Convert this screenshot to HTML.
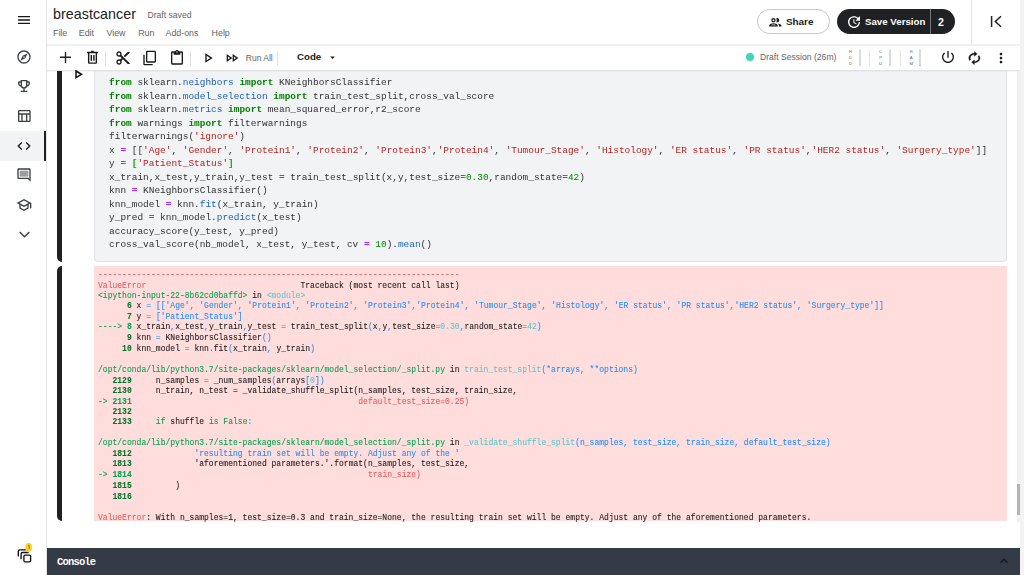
<!DOCTYPE html>
<html>
<head>
<meta charset="utf-8">
<style>
*{box-sizing:border-box;margin:0;padding:0}
html,body{width:1024px;height:575px;overflow:hidden;background:#fff;font-family:"Liberation Sans",sans-serif;color:#202124}
div,span,svg,pre{position:absolute}
pre span,pre b{position:static}
.ic{display:block}
#strip{left:1020px;top:0;width:4px;height:575px;background:#f3f3f3}
#side{left:0;top:0;width:47px;height:575px;background:#fff;border-right:1px solid #e4e5e7}
#active{left:0;top:131px;width:46px;height:30px;background:#f1f3f4}
#activebar{left:44px;top:131px;width:2px;height:30px;background:#202124}
#header{left:47px;top:0;width:973px;height:46px;background:#fff;border-bottom:2px solid #f0f1f2}
#title{left:53px;top:5.700px;letter-spacing:0.030px;font-size:14.300px;line-height:17px;color:#202124;white-space:nowrap}
#draft{left:147.500px;top:10.300px;font-size:8.600px;line-height:10px;color:#5f6368;white-space:nowrap}
.menu{top:27.500px;font-size:8.850px;line-height:11px;color:#5f6368;white-space:nowrap}
#rightpane{left:971px;top:0;width:49px;height:44px;border-left:1px solid #e4e5e7;background:#fff}
#share{left:757px;top:9px;width:73px;height:25px;border:1px solid #c4c6c9;border-radius:13px;background:#fff}
#sharet{left:786px;top:16.200px;font-size:9.900px;line-height:12px;font-weight:bold;color:#202124}
#save{left:836.500px;top:9px;width:118.500px;height:25px;border-radius:13px;background:#202124}
#savet{left:865px;top:16.450px;font-size:9.700px;line-height:12px;font-weight:bold;color:#fff;white-space:nowrap}
#saven{left:938px;top:16.450px;font-size:10.500px;line-height:12px;font-weight:bold;color:#fff}
#savediv{left:929.500px;top:9px;width:1px;height:25px;background:#75777a}
#toolbar{left:47px;top:46px;width:973px;height:25px;background:#fff;border-bottom:1px solid #e2e3e5}
#tbshadow{left:47px;top:71px;width:973px;height:1px;background:rgba(0,0,0,0.03)}
.sep{top:50.500px;width:1px;height:15px;background:#dfe1e4}
#runall{left:245.800px;top:52.600px;font-size:8.500px;line-height:11px;color:#5f6368;white-space:nowrap}
#codet{left:297px;top:51.300px;font-size:9.700px;line-height:12px;font-weight:bold;color:#202124}
#sess{left:760px;top:52.350px;font-size:8.600px;line-height:10px;color:#5f6368;white-space:nowrap}
#dot{left:746px;top:53px;width:8px;height:8px;border-radius:4px;background:#3ed6b5}
.meter{top:49.300px;font-size:4.300px;line-height:6px;color:#666;text-align:center;width:6px}
.mbar{top:49.300px;width:2px;height:16.700px;background:#dadada;border-radius:1px}
.msep{top:50px;width:1px;height:15.500px;background:#e6e6e6}
#content{left:47px;top:71px;width:970px;height:477px;background:#fff;overflow:hidden;will-change:transform}
.bar{left:10px;width:5px;background:#202124}
#cell{left:47px;top:-8px;width:913px;height:198.500px;background:#f1f3f4;border:1px solid #e0e2e5;border-radius:0 0 4px 4px}
pre{font-family:"Liberation Mono",monospace}
#src{left:14.100px;top:12px;font-size:9.452px;line-height:13.500px;color:#2f3134;white-space:pre}
#src b{color:#008000;font-weight:bold}
#src .m{color:#1e5fb3}
#src .s{color:#ba2121}
#src .o{color:#aa22ff;font-weight:bold}
#src .n{color:#008800}
#src .k{color:#00b400;font-weight:bold}
#out{left:47px;top:195px;width:913px;height:255px;background:#ffdddd}
#tb{left:4px;top:3.300px;-webkit-text-stroke:0.080px;transform:scaleY(1.160);transform-origin:0 0;font-size:8.040px;line-height:9.080px;color:#1a1a1a;white-space:pre}
#tb .r{color:#e75c58}
#tb .g{color:#00a250}
#tb .G{color:#007427;font-weight:bold}
#tb .c{color:#60c6c8}
#tb .b{color:#208ffb}
#scroll{left:1017px;top:71px;width:3px;height:451px;background:#f1f1f1}
#thumb{left:1017px;top:484px;width:3px;height:31px;background:#b4b4b4}
#console{left:47px;top:548px;width:973px;height:27px;background:#353a47}
#consolet{left:57px;top:555.500px;font-family:"Liberation Mono",monospace;font-weight:bold;font-size:10.500px;line-height:12px;letter-spacing:-0.830px;color:#fff}
</style>
</head>
<body>
<div id="strip"></div>
<div id="side"><div id="active"></div><div id="activebar"></div></div>
<div id="header"></div>
<div id="title">breastcancer</div>
<div id="draft">Draft saved</div>
<div class="menu" style="left:53px">File</div>
<div class="menu" style="left:78.800px">Edit</div>
<div class="menu" style="left:106.500px">View</div>
<div class="menu" style="left:138.200px">Run</div>
<div class="menu" style="left:165.500px">Add-ons</div>
<div class="menu" style="left:211.600px">Help</div>
<div id="rightpane"></div>
<div id="share"></div><div id="sharet">Share</div>
<div id="save"></div><div id="savet">Save Version</div><div id="savediv"></div><div id="saven">2</div>
<div id="toolbar"></div>
<div class="sep" style="left:105px"></div>
<div class="sep" style="left:190px"></div>
<div class="sep" style="left:277px"></div>
<div id="runall">Run All</div>
<div id="codet">Code</div>
<div id="dot"></div>
<div id="sess">Draft Session (26m)</div>
<div class="meter" style="left:847.200px">H<br>D<br>D</div><div class="mbar" style="left:858.500px"></div>
<div class="msep" style="left:869px"></div>
<div class="meter" style="left:877.600px">C<br>P<br>U</div><div class="mbar" style="left:889.200px"></div>
<div class="msep" style="left:899.500px"></div>
<div class="meter" style="left:908.300px">R<br>A<br>M</div><div class="mbar" style="left:919.400px;background:linear-gradient(#dadada 0,#dadada 92%,#4fd0c0 92%)"></div>
<div id="content">
  <div class="bar" style="top:-10px;height:201px;border-radius:0 0 0 5px"></div>
  <div class="bar" style="top:195px;height:255px;border-radius:5px 0 0 5px"></div>
  <div id="cell"><pre id="src"><b>from</b> sklearn.<span class="m">neighbors</span> <b>import</b> KNeighborsClassifier
<b>from</b> sklearn.<span class="m">model_selection</span> <b>import</b> train_test_split,cross_val_score
<b>from</b> sklearn.<span class="m">metrics</span> <b>import</b> mean_squared_error,r2_score
<b>from</b> warnings <b>import</b> filterwarnings
filterwarnings(<span class="s">'ignore'</span>)
x <span class="o">=</span> [[<span class="s">'Age'</span>, <span class="s">'Gender'</span>, <span class="s">'Protein1'</span>, <span class="s">'Protein2'</span>, <span class="s">'Protein3'</span>,<span class="s">'Protein4'</span>, <span class="s">'Tumour_Stage'</span>, <span class="s">'Histology'</span>, <span class="s">'ER status'</span>, <span class="s">'PR status'</span>,<span class="s">'HER2 status'</span>, <span class="s">'Surgery_type'</span>]]
y <span class="o">=</span> <span class="k">[</span><span class="s">'Patient_Status'</span><span class="k">]</span>
x_train,x_test,y_train,y_test <span class="o">=</span> train_test_split(x,y,test_size<span class="o">=</span><span class="n">0.30</span>,random_state<span class="o">=</span><span class="n">42</span>)
knn <span class="o">=</span> KNeighborsClassifier()
knn_model <span class="o">=</span> knn.<span class="m">fit</span>(x_train, y_train)
y_pred <span class="o">=</span> knn_model.<span class="m">predict</span>(x_test)
accuracy_score(y_test, y_pred)
cross_val_score(nb_model, x_test, y_test, cv <span class="o">=</span> <span class="n">10</span>).<span class="m">mean</span>()</pre></div>
  <div id="out"><pre id="tb"><span class="r">---------------------------------------------------------------------------</span>
<span class="r">ValueError</span>                                Traceback (most recent call last)
<span class="g">&lt;ipython-input-22-8b62cd0baffd&gt;</span> in <span class="c">&lt;module&gt;</span>
<span class="G">      6</span> x <span class="b">=</span> <span class="b">[[</span><span class="b">'Age'</span><span class="b">,</span> <span class="b">'Gender'</span><span class="b">,</span> <span class="b">'Protein1'</span><span class="b">,</span> <span class="b">'Protein2'</span><span class="b">,</span> <span class="b">'Protein3'</span><span class="b">,</span><span class="b">'Protein4'</span><span class="b">,</span> <span class="b">'Tumour_Stage'</span><span class="b">,</span> <span class="b">'Histology'</span><span class="b">,</span> <span class="b">'ER status'</span><span class="b">,</span> <span class="b">'PR status'</span><span class="b">,</span><span class="b">'HER2 status'</span><span class="b">,</span> <span class="b">'Surgery_type'</span><span class="b">]]</span>
<span class="G">      7</span> y <span class="b">=</span> <span class="b">[</span><span class="b">'Patient_Status'</span><span class="b">]</span>
<span class="g">----&gt; <b>8</b></span> x_train<span class="b">,</span>x_test<span class="b">,</span>y_train<span class="b">,</span>y_test <span class="b">=</span> train_test_split<span class="b">(</span>x<span class="b">,</span>y<span class="b">,</span>test_size<span class="b">=</span><span class="c">0.30</span><span class="b">,</span>random_state<span class="b">=</span><span class="c">42</span><span class="b">)</span>
<span class="G">      9</span> knn <span class="b">=</span> KNeighborsClassifier<span class="b">()</span>
<span class="G">     10</span> knn_model <span class="b">=</span> knn<span class="b">.</span>fit<span class="b">(</span>x_train<span class="b">,</span> y_train<span class="b">)</span>

<span class="g">/opt/conda/lib/python3.7/site-packages/sklearn/model_selection/_split.py</span> in <span class="c">train_test_split</span><span class="b">(*arrays, **options)</span>
<span class="G">   2129</span>     n_samples <span class="b">=</span> _num_samples<span class="b">(</span>arrays<span class="b">[</span><span class="c">0</span><span class="b">])</span>
<span class="G">   2130</span>     n_train, n_test = _validate_shuffle_split(n_samples, test_size, train_size,
<span class="g">-&gt; <b>2131</b></span>                                               <span class="r">default_test_size=0.25)</span>
<span class="G">   2132</span> 
<span class="G">   2133</span>     <span class="g">if</span> shuffle <span class="g">is</span> <span class="g">False</span><span class="b">:</span>

<span class="g">/opt/conda/lib/python3.7/site-packages/sklearn/model_selection/_split.py</span> in <span class="c">_validate_shuffle_split</span><span class="b">(n_samples, test_size, train_size, default_test_size)</span>
<span class="G">   1812</span>             <span class="b">'resulting train set will be empty. Adjust any of the '</span>
<span class="G">   1813</span>             'aforementioned parameters.'.format(n_samples, test_size,
<span class="g">-&gt; <b>1814</b></span>                                                 <span class="r">train_size)</span>
<span class="G">   1815</span>         )
<span class="G">   1816</span> 

<span class="r">ValueError</span>: With n_samples=1, test_size=0.3 and train_size=None, the resulting train set will be empty. Adjust any of the aforementioned parameters.</pre></div>
</div>
<div id="tbshadow"></div>
<div id="scroll"></div><div id="thumb"></div>
<div id="console"></div><div id="consolet">Console</div>
<svg class="ic" style="left:16.2px;top:12px" width="16" height="16" viewBox="0 0 24 24"><path fill="#17181a" d="M3 18h18v-2H3v2zm0-5h18v-2H3v2zm0-7v2h18V6H3z"/></svg>
<svg class="ic" style="left:16.2px;top:48.8px" width="16" height="16" viewBox="0 0 24 24"><path fill="#3c4043" d="M12 2C6.48 2 2 6.48 2 12s4.48 10 10 10 10-4.48 10-10S17.52 2 12 2zm0 18c-4.41 0-8-3.59-8-8s3.59-8 8-8 8 3.59 8 8-3.59 8-8 8zm-5.5-2.5l7.51-3.49L17.5 6.5 9.99 9.99 6.5 17.5zm5.5-6.6c.61 0 1.1.49 1.1 1.1s-.49 1.1-1.1 1.1-1.1-.49-1.1-1.1.49-1.1 1.1-1.1z"/></svg>
<svg class="ic" style="left:16.2px;top:78px" width="16" height="16" viewBox="0 0 24 24"><path fill="#3c4043" d="M19 5h-2V3H7v2H5c-1.1 0-2 .9-2 2v1c0 2.55 1.92 4.63 4.39 4.94.63 1.5 1.98 2.63 3.61 2.96V19H7v2h10v-2h-4v-3.1c1.63-.33 2.98-1.46 3.61-2.96C19.08 12.63 21 10.55 21 8V7c0-1.1-.9-2-2-2zM5 8V7h2v3.82C5.84 10.4 5 9.3 5 8zm7 6c-1.65 0-3-1.35-3-3V5h6v6c0 1.65-1.35 3-3 3zm7-6c0 1.3-.84 2.4-2 2.82V7h2v1z"/></svg>
<svg class="ic" style="left:16.2px;top:108px" width="16" height="16" viewBox="0 0 24 24"><path fill="#3c4043" d="M20 3H5c-1.1 0-2 .9-2 2v14c0 1.1.9 2 2 2h15c1.1 0 2-.9 2-2V5c0-1.1-.9-2-2-2zm0 2v3H5V5h15zm-5 14h-5v-9h5v9zM5 10h3v9H5v-9zm12 9v-9h3v9h-3z"/></svg>
<svg class="ic" style="left:16.2px;top:137.8px" width="16" height="16" viewBox="0 0 24 24"><path fill="#17181a" d="M9.4 16.6L4.8 12l4.6-4.6L8 6l-6 6 6 6 1.4-1.4zm5.2 0l4.6-4.6-4.6-4.6L16 6l6 6-6 6-1.4-1.4z"/></svg>
<svg class="ic" style="left:16.2px;top:166.8px" width="16" height="16" viewBox="0 0 24 24"><path fill="#3c4043" d="M21.99 4c0-1.1-.89-2-1.99-2H4c-1.1 0-2 .9-2 2v12c0 1.1.9 2 2 2h14l4 4-.01-18zM20 4v13.170L18.830 16H4V4h16z"/><rect x="5.500" y="5.500" width="13" height="9" fill="#9b9ea3"/></svg>
<svg class="ic" style="left:16.2px;top:197px" width="16" height="16" viewBox="0 0 24 24"><path fill="#3c4043" d="M12 3L1 9l4 2.18v6L12 21l7-3.82v-6l2-1.09V17h2V9L12 3zm6.82 6L12 12.72 5.18 9 12 5.28 18.82 9zM17 15.99l-5 2.73-5-2.73v-3.72L12 15l5-2.73v3.72z"/></svg>
<svg class="ic" style="left:14px;top:226px" width="21" height="16" viewBox="0 0 21 16"><path d="M5.700 6L10.500 10.800 15.300 6" stroke="#3c4043" stroke-width="1.450" fill="none"/></svg>
<svg class="ic" style="left:58px;top:50.400px" width="15" height="15" viewBox="0 0 15 15"><path d="M7.5 2v10.900M2.050 7.200h10.900" stroke="#202124" stroke-width="1.350" fill="none"/></svg>
<svg class="ic" style="left:85px;top:50px" width="15" height="15" viewBox="0 0 15 15"><path d="M1.900 2.500h11.100M6.200 1.350h2.600M3.650 2.700v9.800a0.600 0.600 0 0 0 0.600 0.600h6.500a0.600 0.600 0 0 0 0.600-0.600V2.700M6.300 5.100v5.600M8.900 5.100v5.600" stroke="#17181a" stroke-width="1.400" fill="none"/></svg>
<svg class="ic" style="left:115px;top:49.5px" width="16" height="16" viewBox="0 0 24 24"><path fill="#17181a" d="M9.64 7.64c.23-.5.36-1.05.36-1.64 0-2.21-1.79-4-4-4S2 3.79 2 6s1.79 4 4 4c.59 0 1.14-.13 1.64-.36L10 12l-2.36 2.36C7.14 14.13 6.59 14 6 14c-2.21 0-4 1.79-4 4s1.79 4 4 4 4-1.79 4-4c0-.59-.13-1.14-.36-1.64L12 14l7 7h3v-1L9.64 7.64zM6 8c-1.1 0-2-.89-2-2s.9-2 2-2 2 .89 2 2-.9 2-2 2zm0 12c-1.1 0-2-.89-2-2s.9-2 2-2 2 .89 2 2-.9 2-2 2zm6-7.5c-.28 0-.5-.22-.5-.5s.22-.5.5-.5.5.22.5.5-.22.5-.5.5zM19 3l-6 6 2 2 7-7V3h-3z"/></svg>
<svg class="ic" style="left:142.030px;top:49.600px" width="16" height="16" viewBox="0 0 24 24"><path transform="translate(0,24) scale(1,-1)" fill="#17181a" d="M16 1H4c-1.1 0-2 .9-2 2v14h2V3h12V1zm3 4H8c-1.1 0-2 .9-2 2v14c0 1.1.9 2 2 2h11c1.1 0 2-.9 2-2V7c0-1.1-.9-2-2-2zm0 16H8V7h11v14z"/></svg>
<svg class="ic" style="left:168.800px;top:50px" width="16" height="16" viewBox="0 0 24 24"><path fill="#17181a" d="M19 2h-4.18C14.4.84 13.3 0 12 0c-1.3 0-2.4.84-2.82 2H5c-1.1 0-2 .9-2 2v16c0 1.1.9 2 2 2h14c1.1 0 2-.9 2-2V4c0-1.1-.9-2-2-2zm-7 0c.55 0 1 .45 1 1s-.45 1-1 1-1-.45-1-1 .45-1 1-1zm7 18H5V4h2v3h10V4h2v16z"/></svg>
<svg class="ic" style="left:200px;top:49.700px" width="16" height="16" viewBox="0 0 24 24"><path fill="#17181a" d="M10 8.64L15.27 12 10 15.36V8.64M8 5v14l11-7L8 5z"/></svg>
<svg class="ic" style="left:224.100px;top:49.600px" width="16" height="16" viewBox="0 0 24 24"><path fill="#17181a" d="M15 9.86L18.03 12 15 14.14V9.86m-9 0L9.03 12 6 14.14V9.86M13 6v12l8.5-6L13 6zM4 6v12l8.5-6L4 6z"/></svg>
<svg class="ic" style="left:327.2px;top:51.6px" width="11" height="11" viewBox="0 0 24 24"><path fill="#17181a" d="M7 10l5 5 5-5z"/></svg>
<svg class="ic" style="left:939.5px;top:49.1px" width="16" height="16" viewBox="0 0 24 24"><path fill="#17181a" d="M13 3h-2v10h2V3zm4.83 2.17l-1.42 1.42C17.99 7.86 19 9.81 19 12c0 3.87-3.13 7-7 7s-7-3.13-7-7c0-2.19 1.01-4.14 2.58-5.42L6.17 5.17C4.23 6.82 3 9.26 3 12c0 4.97 4.03 9 9 9s9-4.03 9-9c0-2.74-1.23-5.18-3.17-6.83z"/></svg>
<svg class="ic" style="left:966.200px;top:50.500px" width="16.800" height="14.200" viewBox="0 0 24 24" preserveAspectRatio="none"><path stroke="#17181a" stroke-width="0.600" fill="#17181a" d="M12 6v3l4-4-4-4v3c-4.42 0-8 3.58-8 8 0 1.57.46 3.03 1.24 4.26L6.7 14.8c-.45-.83-.7-1.79-.7-2.8 0-3.31 2.69-6 6-6zm6.76 1.74L17.3 9.2c.44.84.7 1.79.7 2.8 0 3.31-2.69 6-6 6v-3l-4 4 4 4v-3c4.42 0 8-3.58 8-8 0-1.57-.46-3.03-1.24-4.26z"/></svg>
<svg class="ic" style="left:993.4px;top:49.6px" width="16" height="16" viewBox="0 0 24 24"><path fill="#17181a" d="M12 8c1.1 0 2-.9 2-2s-.9-2-2-2-2 .9-2 2 .9 2 2 2zm0 2c-1.1 0-2 .9-2 2s.9 2 2 2 2-.9 2-2-.9-2-2-2zm0 6c-1.1 0-2 .9-2 2s.9 2 2 2 2-.9 2-2-.9-2-2-2z"/></svg>
<svg class="ic" style="left:767.75px;top:14.75px" width="14.6" height="14.6" viewBox="0 0 24 24"><path fill="#17181a" d="M9 13.75c-2.34 0-7 1.17-7 3.5V19h14v-1.75c0-2.33-4.66-3.5-7-3.5zM4.34 17c.84-.58 2.87-1.25 4.66-1.25s3.82.67 4.66 1.25H4.34zM9 12c1.93 0 3.5-1.57 3.5-3.5S10.93 5 9 5 5.5 6.57 5.5 8.5 7.07 12 9 12zm0-5c.83 0 1.5.67 1.5 1.5S9.83 10 9 10s-1.5-.67-1.5-1.5S8.17 7 9 7zm7.04 6.81c1.16.84 1.96 1.96 1.96 3.44V19h4v-1.75c0-2.02-3.5-3.17-5.96-3.44zM15 12c1.93 0 3.5-1.57 3.5-3.5S16.93 5 15 5c-.54 0-1.04.13-1.5.35.63.89 1 1.98 1 3.15s-.37 2.26-1 3.15c.46.22.96.35 1.5.35z"/></svg>
<svg class="ic" style="left:845.7px;top:14px" width="16" height="16" viewBox="0 0 24 24"><path fill="#fff" d="M21 10.12h-6.78l2.74-2.82c-2.73-2.7-7.15-2.8-9.88-.1-2.73 2.71-2.73 7.08 0 9.79s7.15 2.71 9.88 0C18.32 15.650 19 14.080 19 12.100h2c0 1.980-.88 4.550-2.640 6.290-3.510 3.480-9.210 3.480-12.720 0-3.500-3.470-3.530-9.110-.020-12.580s9.140-3.470 12.650 0L21 3v7.120zM12.500 8v4.250l3.500 2.080-.72 1.210L11 13V8h1.500z"/></svg>
<svg class="ic" style="left:986px;top:12px" width="20" height="20" viewBox="0 0 20 20"><path d="M5.600 4v11M15 4.300L9.300 9.500l5.700 5.200" stroke="#202124" stroke-width="1.500" fill="none"/></svg>
<svg class="ic" style="left:74px;top:68px" width="12" height="12" viewBox="0 0 12 12"><path d="M2 3L7.500 6.300 2 9.600z" stroke="#111" stroke-width="1.500" fill="none" stroke-linejoin="miter"/></svg>
<svg class="ic" style="left:996.2px;top:553.2px" width="16" height="16" viewBox="0 0 24 24"><path fill="#15171c" d="M12 8l-6 6 1.41 1.41L12 10.83l4.59 4.58L18 14z"/></svg>
<svg class="ic" style="left:14px;top:540px" width="22" height="26" viewBox="0 0 22 26"><path d="M4.300 16.500V11.300a1.500 1.500 0 0 1 1.500-1.500H12M7.100 19.200v-5.200a1.500 1.500 0 0 1 1.500-1.500h6" stroke="#111" stroke-width="1.350" fill="none"/><rect x="9.900" y="15.100" width="6.700" height="6.700" rx="1.200" stroke="#111" stroke-width="1.350" fill="none"/><rect x="11.500" y="3" width="6.300" height="8.800" rx="3.100" fill="#f7d02c"/><path d="M14.100 5.800l1-.6v4" stroke="#a0631a" stroke-width="0.900" fill="none"/></svg>
</body>
</html>
